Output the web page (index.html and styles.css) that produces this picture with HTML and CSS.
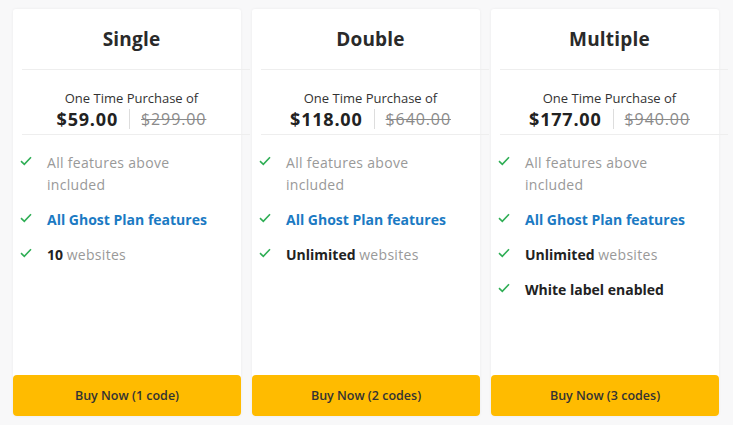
FILE: index.html
```html
<!DOCTYPE html>
<html>
<head>
<meta charset="utf-8">
<link rel="stylesheet" href="styles.css">
</head>
<body>
<div class="plans">
  <div class="card">
    <div class="title">Single</div>
    <div class="price-box">
      <div class="once">One Time Purchase of</div>
      <div class="price-row"><span class="price">$59.00</span><span class="sep"></span><span class="old">$299.00</span></div>
    </div>
    <ul class="features">
      <li><svg class="check" viewBox="0 0 12 10"><path d="M1 5.2 L4.3 8.3 L11 1.2"/></svg><span class="muted">All features above included</span></li>
      <li><svg class="check" viewBox="0 0 12 10"><path d="M1 5.2 L4.3 8.3 L11 1.2"/></svg><span class="blue">All Ghost Plan features</span></li>
      <li><svg class="check" viewBox="0 0 12 10"><path d="M1 5.2 L4.3 8.3 L11 1.2"/></svg><span><b>10</b> <span class="muted">websites</span></span></li>
    </ul>
    <button class="buy">Buy Now (1 code)</button>
  </div>
  <div class="card">
    <div class="title">Double</div>
    <div class="price-box">
      <div class="once">One Time Purchase of</div>
      <div class="price-row"><span class="price">$118.00</span><span class="sep"></span><span class="old">$640.00</span></div>
    </div>
    <ul class="features">
      <li><svg class="check" viewBox="0 0 12 10"><path d="M1 5.2 L4.3 8.3 L11 1.2"/></svg><span class="muted">All features above included</span></li>
      <li><svg class="check" viewBox="0 0 12 10"><path d="M1 5.2 L4.3 8.3 L11 1.2"/></svg><span class="blue">All Ghost Plan features</span></li>
      <li><svg class="check" viewBox="0 0 12 10"><path d="M1 5.2 L4.3 8.3 L11 1.2"/></svg><span><b>Unlimited</b> <span class="muted">websites</span></span></li>
    </ul>
    <button class="buy">Buy Now (2 codes)</button>
  </div>
  <div class="card">
    <div class="title">Multiple</div>
    <div class="price-box">
      <div class="once">One Time Purchase of</div>
      <div class="price-row"><span class="price">$177.00</span><span class="sep"></span><span class="old">$940.00</span></div>
    </div>
    <ul class="features">
      <li><svg class="check" viewBox="0 0 12 10"><path d="M1 5.2 L4.3 8.3 L11 1.2"/></svg><span class="muted">All features above included</span></li>
      <li><svg class="check" viewBox="0 0 12 10"><path d="M1 5.2 L4.3 8.3 L11 1.2"/></svg><span class="blue">All Ghost Plan features</span></li>
      <li><svg class="check" viewBox="0 0 12 10"><path d="M1 5.2 L4.3 8.3 L11 1.2"/></svg><span><b>Unlimited</b> <span class="muted">websites</span></span></li>
      <li><svg class="check" viewBox="0 0 12 10"><path d="M1 5.2 L4.3 8.3 L11 1.2"/></svg><span><b>White label enabled</b></span></li>
    </ul>
    <button class="buy">Buy Now (3 codes)</button>
  </div>
</div>
</body>
</html>
```

FILE: styles.css
```css
* { box-sizing: border-box; }
html, body { margin: 0; padding: 0; }
body {
  background: #f8f8f9;
  font-family: "Open Sans", "Liberation Sans", sans-serif;
  color: #222;
  width: 733px;
  height: 425px;
  overflow: hidden;
}
.plans {
  display: grid;
  grid-template-columns: 228px 228px 228px;
  gap: 11px;
  padding: 9px 13px 0;
}
.card {
  background: #fff;
  height: 407px;
  display: flex;
  flex-direction: column;
  box-shadow: 0 0 3px rgba(0,0,0,0.06);
  border-radius: 3px;
}
.title {
  height: 61px;
  display: flex;
  align-items: center;
  justify-content: center;
  font-size: 19px;
  font-weight: 700;
  letter-spacing: 0.2px;
  color: #2a2a2a;
  margin: 0 -9px 0 9px;
  padding: 0 9px 0 0;
  border-bottom: 1px solid #eeeeee;
}
.price-box {
  height: 65px;
  margin: 0 -9px 0 9px;
  padding: 19px 9px 0 0;
  border-bottom: 1px solid #eeeeee;
  text-align: center;
}
.once {
  font-size: 13px;
  line-height: 18px;
  color: #333;
}
.price-row {
  display: flex;
  align-items: center;
  justify-content: center;
  height: 24px;
}
.price {
  font-size: 18px;
  font-weight: 700;
  letter-spacing: 0.8px;
  color: #222;
}
.sep {
  width: 1px;
  height: 20px;
  background: #ddd;
  margin: 0 11px;
}
.old {
  font-size: 16px;
  letter-spacing: 0.9px;
  color: #8a8a8a;
  text-decoration: line-through;
}
.features {
  list-style: none;
  margin: 0;
  padding: 17px 40px 0 7px;
}
.features li {
  display: flex;
  align-items: flex-start;
  font-size: 14px;
  line-height: 22px;
  margin-bottom: 13px;
  white-space: nowrap;
}
.features li:first-child { white-space: normal; }
.check {
  width: 12px;
  height: 10px;
  flex: none;
  margin: 4px 15px 0 0;
  fill: none;
  stroke: #2fae55;
  stroke-width: 1.6;
}
.muted { color: #999; letter-spacing: 0.3px; }
.blue { color: #1b7ac3; font-weight: 700; }
b { font-weight: 700; color: #222; }
.buy {
  margin-top: auto;
  height: 41px;
  border: none;
  border-radius: 4px;
  background: #ffbb00;
  color: #333;
  font-family: inherit;
  font-size: 12.5px;
  font-weight: 600;
  cursor: pointer;
}
```
